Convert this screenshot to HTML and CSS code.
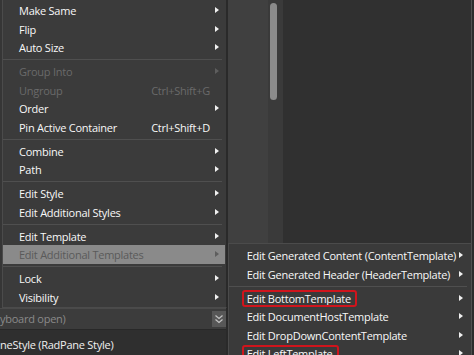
FILE: index.html
```html
<!DOCTYPE html>
<html>
<head>
<meta charset="utf-8">
<link rel="stylesheet" href="styles.css">
</head>
<body>
<div class="app">
  <div class="left-panel">
    <div class="panel-fill"></div>
    <div class="search-row">
      <span class="search-text">yboard open)</span>
      <span class="expand-btn">
        <svg width="14" height="16" viewBox="0 0 14 16"><path d="M3.5 4.5 L7 7.5 L10.5 4.5 M3.5 8.5 L7 11.5 L10.5 8.5" fill="none" stroke="#c4c4c4" stroke-width="1.2"/></svg>
      </span>
    </div>
    <div class="style-row">neStyle (RadPane Style)</div>
  </div>
  <div class="mid-column">
    <div class="mid-area"></div>
    <div class="scroll-track"><div class="scroll-thumb"></div></div>
  </div>
  <div class="canvas"></div>
</div>

<div class="context-menu">
  <div class="item"><span class="label">Make Same</span><span class="arrow"></span></div>
  <div class="item"><span class="label">Flip</span><span class="arrow"></span></div>
  <div class="item"><span class="label">Auto Size</span><span class="arrow"></span></div>
  <div class="sep"></div>
  <div class="item disabled"><span class="label">Group Into</span><span class="arrow"></span></div>
  <div class="item disabled"><span class="label">Ungroup</span><span class="shortcut">Ctrl+Shift+G</span><span class="arrow none"></span></div>
  <div class="item"><span class="label">Order</span><span class="arrow"></span></div>
  <div class="item"><span class="label">Pin Active Container</span><span class="shortcut">Ctrl+Shift+D</span><span class="arrow none"></span></div>
  <div class="sep"></div>
  <div class="item"><span class="label">Combine</span><span class="arrow"></span></div>
  <div class="item"><span class="label">Path</span><span class="arrow"></span></div>
  <div class="sep"></div>
  <div class="item"><span class="label">Edit Style</span><span class="arrow"></span></div>
  <div class="item"><span class="label">Edit Additional Styles</span><span class="arrow"></span></div>
  <div class="sep"></div>
  <div class="item"><span class="label">Edit Template</span><span class="arrow"></span></div>
  <div class="item active"><span class="label">Edit Additional Templates</span><span class="arrow"></span></div>
  <div class="sep"></div>
  <div class="item"><span class="label">Lock</span><span class="arrow"></span></div>
  <div class="item"><span class="label">Visibility</span><span class="arrow"></span></div>
</div>

<div class="submenu">
  <div class="item"><span class="label">Edit Generated Content (ContentTemplate)</span><span class="arrow"></span></div>
  <div class="item"><span class="label">Edit Generated Header (HeaderTemplate)</span><span class="arrow"></span></div>
  <div class="sep"></div>
  <div class="item"><span class="label marked">Edit BottomTemplate</span><span class="arrow"></span></div>
  <div class="item"><span class="label">Edit DocumentHostTemplate</span><span class="arrow"></span></div>
  <div class="item"><span class="label">Edit DropDownContentTemplate</span><span class="arrow"></span></div>
  <div class="item"><span class="label marked">Edit LeftTemplate</span><span class="arrow"></span></div>
</div>
</body>
</html>
```

FILE: styles.css
```css
* { box-sizing: border-box; }
html, body { margin: 0; padding: 0; }
body {
  width: 474px;
  height: 355px;
  overflow: hidden;
  position: relative;
  background: #2c2c2c;
  font-family: "Open Sans", "Noto Sans", sans-serif;
  font-size: 11px;
  letter-spacing: -0.25px;
  color: #f8f8f8;
}
.app { display: flex; height: 355px; }

.left-panel {
  width: 228px;
  flex: none;
  display: flex;
  flex-direction: column;
  background: #363636;
  border-right: 2px solid #2a2a2a;
}
.panel-fill { flex: 1; }
.search-row {
  height: 22px;
  flex: none;
  display: flex;
  align-items: center;
  background: #3c3c3c;
  border-top: 1px solid #4a4a4a;
  border-bottom: 1px solid #282828;
}
.search-text { flex: 1; color: #8a8a8a; line-height: 16px; }
.expand-btn {
  width: 14px;
  height: 16px;
  background: #575757;
  display: flex;
  align-items: center;
  justify-content: center;
}
.style-row {
  height: 25px;
  flex: none;
  background: #2f2f2f;
  line-height: 18px;
  padding-top: 6px;
  color: #f0f0f0;
}

.mid-column { width: 55px; flex: none; display: flex; }
.mid-area { flex: 1; background: #404040; }
.scroll-track { width: 15px; background: #3a3a3a; padding: 3px 0 0 2px; }
.scroll-thumb { width: 7px; height: 97px; border-radius: 4px; background: #8b8b8b; }

.canvas { flex: 1; background: #303030; border-right: 1px solid #505050; margin-right: 2px; }

.context-menu {
  position: absolute;
  left: 2px;
  top: 0;
  width: 225px;
  padding: 1.45px 0 1px 0;
  background: #3b3b3b;
  border-left: 1px solid #4b4b4b;
  border-right: 1px solid #2a2a2a;
  border-bottom: 1px solid #4b4b4b;
}
.item {
  height: 18.5px;
  display: flex;
  align-items: center;
  padding-left: 16px;
  margin-right: 1px;
  white-space: nowrap;
}
.item .label { flex: 1; }
.item .shortcut { text-align: right; padding-right: 1px; }
.item .arrow {
  width: 14px;
  height: 18px;
  flex: none;
  position: relative;
}
.item .arrow::before {
  content: "";
  position: absolute;
  left: 4px;
  top: 5.5px;
  border-left: 4px solid #f0f0f0;
  border-top: 3.5px solid transparent;
  border-bottom: 3.5px solid transparent;
}
.item .arrow.none::before { display: none; }
.item.disabled { color: #6a6a6a; }
.item.disabled .arrow::before { border-left-color: #5e5e5e; }
.item.active { background: #8a8a8a; color: #5a5a5a; }
.item.active .arrow::before { border-left-color: #5e5e5e; }
.sep {
  height: 1px;
  margin: 2.25px 4px 2.25px 0;
  background: #4f4f4f;
}

.submenu {
  position: absolute;
  left: 228px;
  top: 243px;
  width: 244px;
  height: 130px;
  padding-top: 2.45px;
  background: #3a3a3a;
  border-top: 1px solid #4b4b4b;
  border-left: 1px solid #4b4b4b;
  border-right: 1px solid #505050;
}
.submenu .item { padding-left: 17.7px; }
.submenu .item .arrow { width: 12px; }
.submenu .item .arrow::before { left: 1px; }
.label.marked { flex: none; position: relative; margin-right: auto; }
.label.marked::after {
  content: "";
  position: absolute;
  left: -5px;
  right: -6px;
  top: -1px;
  bottom: -1px;
  border: 2.5px solid #d0141c;
  border-radius: 3px;
}
```
